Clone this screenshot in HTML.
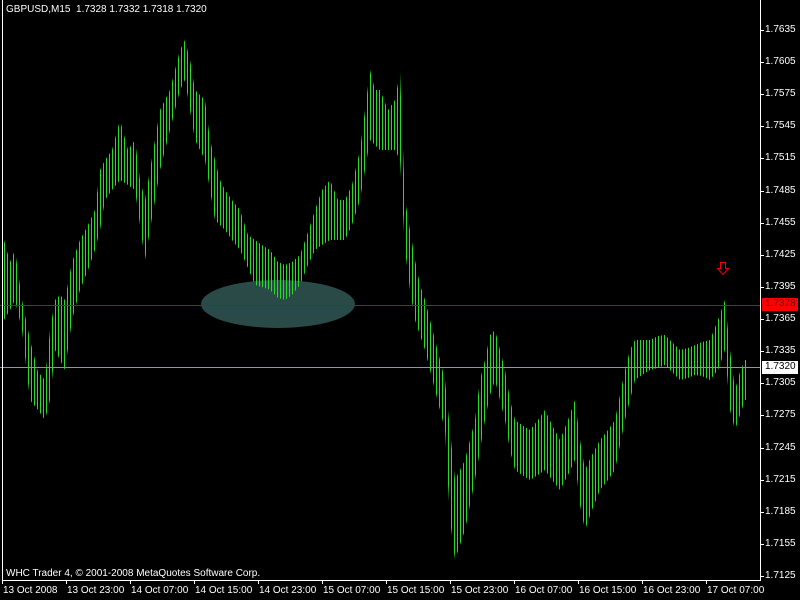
<!DOCTYPE html>
<html><head><meta charset="utf-8"><style>
html,body{margin:0;padding:0;background:#000;width:800px;height:600px;overflow:hidden}
body{position:relative;font-family:"Liberation Sans",sans-serif;font-size:10px;color:#fff}
.t{position:absolute;white-space:nowrap;line-height:12px}
.p{position:absolute;left:765px;white-space:nowrap;line-height:12px;font-size:10px}
svg{position:absolute;left:0;top:0}
</style></head><body>
<svg width="800" height="600" viewBox="0 0 800 600">
<defs><pattern id="st" x="0" y="0" width="3" height="600" patternUnits="userSpaceOnUse"><rect x="1" y="0" width="1" height="600" fill="#22dd22"/></pattern></defs>
<ellipse cx="278" cy="304" rx="77" ry="24" fill="#2a4a48"/>
<polygon fill="url(#st)" points="4,240 10,262 15,250 22,300 30,340 38,372 45,380 50,330 55,300 60,295 65,300 72,262 80,240 88,225 95,210 100,170 105,160 112,150 120,120 128,150 135,140 140,180 145,200 150,170 155,140 160,110 165,100 170,90 175,70 180,50 185,40 190,60 195,90 200,95 205,100 210,140 215,160 220,180 225,190 232,200 240,210 248,235 255,240 262,245 270,250 278,262 285,265 292,262 300,255 308,232 315,210 322,190 330,180 338,200 345,200 352,185 360,150 365,110 370,70 375,90 380,90 388,110 395,100 400,72 405,200 410,230 415,260 420,285 425,300 430,320 435,340 440,360 445,380 450,430 455,480 460,470 465,460 470,440 475,420 480,380 485,360 490,335 495,330 500,350 505,370 510,400 515,420 522,425 530,430 538,420 545,410 552,425 560,440 568,420 575,400 580,440 585,470 592,455 600,440 608,430 615,420 620,395 625,370 630,350 635,340 642,340 650,340 658,336 665,335 672,342 680,350 688,348 695,345 702,342 710,340 718,320 725,300 730,350 735,390 740,372 745,360 748,360
748,400 745,400 740,415 735,430 730,410 725,350 718,370 710,380 702,376 695,375 688,378 680,380 672,372 665,365 658,368 650,370 642,375 635,380 630,400 625,420 620,445 615,470 608,480 600,490 592,510 585,530 580,505 575,460 568,475 560,490 552,480 545,470 538,475 530,480 522,475 515,470 510,450 505,420 500,400 495,380 490,395 485,420 480,450 475,480 470,505 465,530 460,545 455,560 450,520 445,430 440,410 435,390 430,370 425,350 420,335 415,320 410,290 405,250 400,160 395,150 388,150 380,150 375,145 370,140 365,170 360,200 352,225 345,240 338,240 330,240 322,245 315,250 308,265 300,285 292,295 285,300 278,298 270,290 262,287 255,285 248,268 240,250 232,240 225,230 220,225 215,220 210,190 205,160 200,150 195,140 190,110 185,80 180,90 175,110 170,130 165,150 160,170 155,200 150,230 145,260 140,225 135,190 128,185 120,180 112,190 105,200 100,230 95,250 88,270 80,290 72,320 65,370 60,360 55,350 50,400 45,420 38,410 30,400 22,330 15,300 10,310 4,320"/>
<rect x="0" y="305" width="760" height="1" fill="#cc0000"/>
<rect x="0" y="367" width="760" height="1" fill="#8c96a0"/>
<rect x="760" y="0" width="1" height="581" fill="#fff"/>
<rect x="2" y="580" width="759" height="1" fill="#fff"/>
<rect x="2" y="0" width="1" height="581" fill="#fff"/>
<g fill="#fff">
<rect x="760" y="30" width="4" height="1"/><rect x="760" y="62" width="4" height="1"/><rect x="760" y="94" width="4" height="1"/><rect x="760" y="126" width="4" height="1"/><rect x="760" y="158" width="4" height="1"/><rect x="760" y="191" width="4" height="1"/><rect x="760" y="223" width="4" height="1"/><rect x="760" y="255" width="4" height="1"/><rect x="760" y="287" width="4" height="1"/><rect x="760" y="319" width="4" height="1"/><rect x="760" y="351" width="4" height="1"/><rect x="760" y="383" width="4" height="1"/><rect x="760" y="415" width="4" height="1"/><rect x="760" y="448" width="4" height="1"/><rect x="760" y="480" width="4" height="1"/><rect x="760" y="512" width="4" height="1"/><rect x="760" y="544" width="4" height="1"/><rect x="760" y="576" width="4" height="1"/>
<rect x="2" y="580" width="1" height="4"/><rect x="66" y="580" width="1" height="4"/><rect x="130" y="580" width="1" height="4"/><rect x="194" y="580" width="1" height="4"/><rect x="258" y="580" width="1" height="4"/><rect x="322" y="580" width="1" height="4"/><rect x="386" y="580" width="1" height="4"/><rect x="450" y="580" width="1" height="4"/><rect x="514" y="580" width="1" height="4"/><rect x="578" y="580" width="1" height="4"/><rect x="642" y="580" width="1" height="4"/><rect x="706" y="580" width="1" height="4"/>
</g>
<path d="M720.5 262.5h5v6h3l-5.5 6l-5.5-6h3z" fill="none" stroke="#e00" stroke-width="1"/>
</svg>
<div class="t" style="left:6px;top:4px">GBPUSD,M15&nbsp; 1.7328 1.7332 1.7318 1.7320</div>
<div class="t" style="left:6px;top:568px">WHC Trader 4, © 2001-2008 MetaQuotes Software Corp.</div>
<div class="p" style="top:24px">1.7635</div><div class="p" style="top:56px">1.7605</div><div class="p" style="top:88px">1.7575</div><div class="p" style="top:120px">1.7545</div><div class="p" style="top:152px">1.7515</div><div class="p" style="top:185px">1.7485</div><div class="p" style="top:217px">1.7455</div><div class="p" style="top:249px">1.7425</div><div class="p" style="top:281px">1.7395</div><div class="p" style="top:313px">1.7365</div><div class="p" style="top:345px">1.7335</div><div class="p" style="top:377px">1.7305</div><div class="p" style="top:409px">1.7275</div><div class="p" style="top:442px">1.7245</div><div class="p" style="top:474px">1.7215</div><div class="p" style="top:506px">1.7185</div><div class="p" style="top:538px">1.7155</div><div class="p" style="top:570px">1.7125</div>
<div style="position:absolute;left:762px;top:298px;width:36px;height:13px;background:#f00"></div>
<div class="p" style="top:298px;color:#600">1.7378</div>
<div style="position:absolute;left:762px;top:361px;width:36px;height:13px;background:#fff"></div>
<div class="p" style="top:361px;color:#000">1.7320</div>
<div class="t" style="left:3px;top:585px">13 Oct 2008</div><div class="t" style="left:67px;top:585px">13 Oct 23:00</div><div class="t" style="left:131px;top:585px">14 Oct 07:00</div><div class="t" style="left:195px;top:585px">14 Oct 15:00</div><div class="t" style="left:259px;top:585px">14 Oct 23:00</div><div class="t" style="left:323px;top:585px">15 Oct 07:00</div><div class="t" style="left:387px;top:585px">15 Oct 15:00</div><div class="t" style="left:451px;top:585px">15 Oct 23:00</div><div class="t" style="left:515px;top:585px">16 Oct 07:00</div><div class="t" style="left:579px;top:585px">16 Oct 15:00</div><div class="t" style="left:643px;top:585px">16 Oct 23:00</div><div class="t" style="left:707px;top:585px">17 Oct 07:00</div>
</body></html>
